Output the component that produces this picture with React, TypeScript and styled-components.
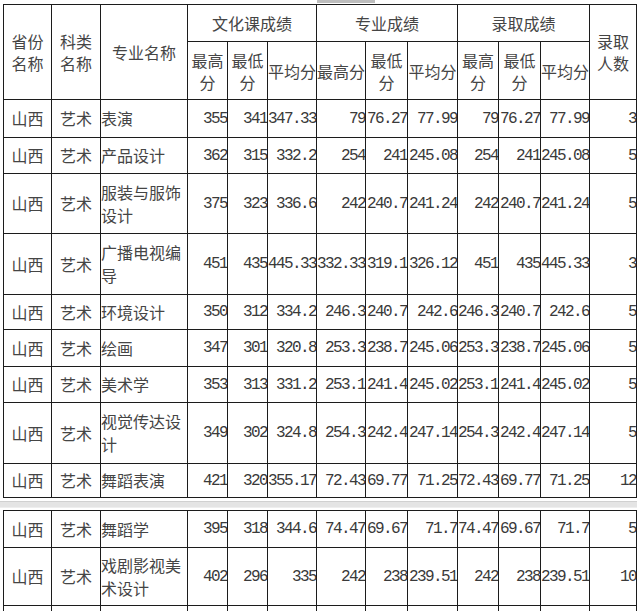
import styled, { createGlobalStyle } from 'styled-components';

const GlobalStyle = createGlobalStyle`
  html, body {
    margin: 0;
    padding: 0;
    background: #fff;
  }
`;

const COLS = [48, 49, 87, 40, 40, 49, 49, 42, 50, 41, 42, 49, 47];

type Row = {
  major: string;
  h: number;
  v: string[];
  n: string;
};

const TOP_ROWS: Row[] = [
  { major: '表演', h: 38, v: ['355', '341', '347.33', '79', '76.27', '77.99', '79', '76.27', '77.99'], n: '3' },
  { major: '产品设计', h: 36, v: ['362', '315', '332.2', '254', '241', '245.08', '254', '241', '245.08'], n: '5' },
  { major: '服装与服饰设计', h: 60, v: ['375', '323', '336.6', '242', '240.7', '241.24', '242', '240.7', '241.24'], n: '5' },
  { major: '广播电视编导', h: 61, v: ['451', '435', '445.33', '332.33', '319.1', '326.12', '451', '435', '445.33'], n: '3' },
  { major: '环境设计', h: 35, v: ['350', '312', '334.2', '246.3', '240.7', '242.6', '246.3', '240.7', '242.6'], n: '5' },
  { major: '绘画', h: 37, v: ['347', '301', '320.8', '253.3', '238.7', '245.06', '253.3', '238.7', '245.06'], n: '5' },
  { major: '美术学', h: 36, v: ['353', '313', '331.2', '253.1', '241.4', '245.02', '253.1', '241.4', '245.02'], n: '5' },
  { major: '视觉传达设计', h: 61, v: ['349', '302', '324.8', '254.3', '242.4', '247.14', '254.3', '242.4', '247.14'], n: '5' },
  { major: '舞蹈表演', h: 34, v: ['421', '320', '355.17', '72.43', '69.77', '71.25', '72.43', '69.77', '71.25'], n: '12' },
];

const BOTTOM_ROWS: Row[] = [
  { major: '舞蹈学', h: 37, v: ['395', '318', '344.6', '74.47', '69.67', '71.7', '74.47', '69.67', '71.7'], n: '5' },
  { major: '戏剧影视美术设计', h: 58, v: ['402', '296', '335', '242', '238', '239.51', '242', '238', '239.51'], n: '10' },
];

const Page = styled.div`
  position: relative;
  padding: 4px 0 0 3px;
  height: 607px;
  overflow: hidden;
  font-family: 'Noto Sans CJK SC', 'Liberation Sans', sans-serif;
  color: #454545;
`;

const TopTab = styled.div`
  position: absolute;
  top: 0;
  left: 317px;
  width: 58px;
  height: 3px;
  background: #bdbdbd;
`;

const Sheet = styled.table`
  border-collapse: collapse;
  table-layout: fixed;
  width: 633px;

  td {
    border: 1px solid #1c1c1c;
    padding: 0;
    overflow: hidden;
    vertical-align: middle;
  }
`;

const Head = styled.td`
  text-align: center;
  font-size: 16px;
  line-height: 22px;
  white-space: pre-line;
`;

const Text = styled.td<{ $center?: boolean }>`
  text-align: ${({ $center }) => ($center ? 'center' : 'left')};
  font-size: 16px;
  line-height: 23px;
`;

const Num = styled.td`
  text-align: right;
  white-space: nowrap;
  font-family: 'Liberation Mono', 'DejaVu Sans Mono', monospace;
  font-size: 16px;
  letter-spacing: -1.6px;
  line-height: 20px;
  color: #3a3a3a;
`;

const Separator = styled.div`
  height: 12px;
  display: flex;
  align-items: center;
  width: 637px;
  margin-left: -3px;

  &::before {
    content: '';
    flex: 1;
    height: 5px;
    background: #e4e4e4;
    border-top: 1px solid #d0d0d0;
    border-bottom: 1px solid #eeeeee;
  }
`;

const ColGroup = () => (
  <colgroup>
    {COLS.map((w, i) => (
      <col key={i} style={{ width: w }} />
    ))}
  </colgroup>
);

const DataRow = ({ row }: { row: Row }) => (
  <tr style={{ height: row.h }}>
    <Text $center>山西</Text>
    <Text $center>艺术</Text>
    <Text>{row.major}</Text>
    {row.v.map((x, i) => (
      <Num key={i}>{x}</Num>
    ))}
    <Num>{row.n}</Num>
  </tr>
);

const SUB = ['最高\n分', '最低\n分', '平均分', '最高分', '最低\n分', '平均分', '最高\n分', '最低\n分', '平均分'];

export default function App() {
  return (
    <>
      <GlobalStyle />
      <Page>
        <TopTab />
        <Sheet>
          <ColGroup />
          <tbody>
            <tr style={{ height: 37 }}>
              <Head rowSpan={2}>{'省份\n名称'}</Head>
              <Head rowSpan={2}>{'科类\n名称'}</Head>
              <Head rowSpan={2}>专业名称</Head>
              <Head colSpan={3}>文化课成绩</Head>
              <Head colSpan={3}>专业成绩</Head>
              <Head colSpan={3}>录取成绩</Head>
              <Head rowSpan={2}>{'录取\n人数'}</Head>
            </tr>
            <tr style={{ height: 58 }}>
              {SUB.map((s, i) => (
                <Head key={i}>{s}</Head>
              ))}
            </tr>
            {TOP_ROWS.map((r) => (
              <DataRow key={r.major} row={r} />
            ))}
          </tbody>
        </Sheet>
        <Separator />
        <Sheet>
          <ColGroup />
          <tbody>
            {BOTTOM_ROWS.map((r) => (
              <DataRow key={r.major} row={r} />
            ))}
            <tr style={{ height: 36 }}>
              {COLS.map((_, i) => (
                <Text key={i} />
              ))}
            </tr>
          </tbody>
        </Sheet>
      </Page>
    </>
  );
}
